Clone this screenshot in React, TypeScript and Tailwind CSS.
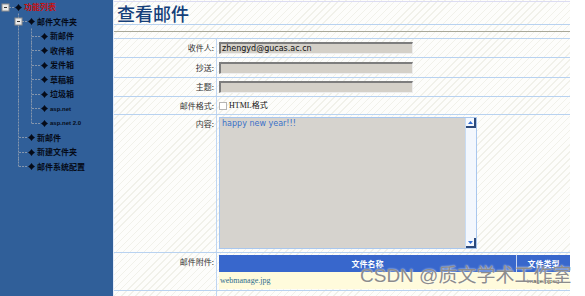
import React from 'react'

type Guide = 'blank' | 'I' | 'T' | 'L' | 'box' | 'boxT'

type TreeRow = {
  label: string
  guides: Guide[]
  root?: boolean
  latin?: boolean
}

const treeRows: TreeRow[] = [
  { label: '功能列表', guides: ['box'], root: true },
  { label: '邮件文件夹', guides: ['blank', 'boxT'] },
  { label: '新邮件', guides: ['blank', 'I', 'T'] },
  { label: '收件箱', guides: ['blank', 'I', 'T'] },
  { label: '发件箱', guides: ['blank', 'I', 'T'] },
  { label: '草稿箱', guides: ['blank', 'I', 'T'] },
  { label: '垃圾箱', guides: ['blank', 'I', 'T'] },
  { label: 'asp.net', guides: ['blank', 'I', 'T'], latin: true },
  { label: 'asp.net 2.0', guides: ['blank', 'I', 'L'], latin: true },
  { label: '新邮件', guides: ['blank', 'T'] },
  { label: '新建文件夹', guides: ['blank', 'T'] },
  { label: '邮件系统配置', guides: ['blank', 'L'] },
]

// one cell of the dotted tree guides
function GuideCell({ kind }: { kind: Guide }) {
  const stroke = '#8596ad'
  return (
    <svg width="13" height="15" viewBox="0 0 13 15" className="shrink-0 overflow-visible">
      {(kind === 'I' || kind === 'T' || kind === 'boxT') && (
        <line x1="5.5" y1="-0.5" x2="5.5" y2="15.5" stroke={stroke} strokeWidth="1" strokeDasharray="2 1" />
      )}
      {kind === 'L' && (
        <line x1="5.5" y1="-0.5" x2="5.5" y2="7.5" stroke={stroke} strokeWidth="1" strokeDasharray="2 1" />
      )}
      {kind !== 'blank' && kind !== 'I' && (
        <line x1="6" y1="7.5" x2="15" y2="7.5" stroke={stroke} strokeWidth="1" strokeDasharray="2 1" />
      )}
      {(kind === 'box' || kind === 'boxT') && (
        <g>
          <rect x="2" y="4" width="7" height="7" fill="#e9e9e9" stroke="#8d8d8d" strokeWidth="1" />
          <line x1="4" y1="7.5" x2="7" y2="7.5" stroke="#333333" strokeWidth="1" />
        </g>
      )}
    </svg>
  )
}

function Star() {
  return (
    <svg width="7" height="7" viewBox="0 0 7 7" className="shrink-0">
      <polygon points="3.5,0 5,2 7,3.5 5,5 3.5,7 2,5 0,3.5 2,2" fill="#050b18" />
    </svg>
  )
}

function Sidebar() {
  return (
    <div className="flex h-full w-[114px] shrink-0 flex-col border-r border-[#e4ecf8] bg-[#305f99] text-[#050b18]">
      {treeRows.map((row, i) => (
        <div key={i} className="flex h-[14.5px] items-center">
          {row.guides.map((g, j) => (
            <GuideCell key={j} kind={g} />
          ))}
          <span className="ml-[2px] flex">
            <Star />
          </span>
          {row.root ? (
            <span className="ml-[2px] text-[8px] font-bold leading-none text-[#c41010] font-['Noto_Sans_CJK_SC',sans-serif]">
              {row.label}
            </span>
          ) : row.latin ? (
            <span className="ml-[2px] text-[6px] font-bold leading-none text-[#050b18] font-['Liberation_Sans',sans-serif]">
              {row.label}
            </span>
          ) : (
            <span className="ml-[2px] text-[8px] font-bold leading-none text-[#050b18] font-['Noto_Sans_CJK_SC',sans-serif]">
              {row.label}
            </span>
          )}
        </div>
      ))}
    </div>
  )
}

function Input({ value }: { value?: string }) {
  return (
    <div className="flex h-[12px] w-[194px] items-center border-t-2 border-l-2 border-r border-b border-t-[#7d7d7d] border-l-[#7d7d7d] border-r-[#eeeeee] border-b-[#eeeeee] bg-[#d4d0c8] pl-[1px] text-[8px] leading-none text-[#111111] font-['DejaVu_Sans',sans-serif]">
      {value}
    </div>
  )
}

function FormRow({
  label,
  height,
  top,
  children,
}: {
  label: string
  height: string
  top?: boolean
  children?: React.ReactNode
}) {
  return (
    <div className={`flex border-b border-[#b8d2f0] ${height}`}>
      <div
        className={`flex w-[103px] shrink-0 justify-end border-r border-[#bfd6f2] pr-[2px] text-[8px] leading-none text-[#333333] font-['Noto_Sans_CJK_SC',sans-serif] ${
          top ? 'items-start pt-[5px]' : 'items-center'
        }`}
      >
        {label}:
      </div>
      <div className={`flex flex-1 pl-[2px] ${top ? 'items-start pt-[2px]' : 'items-center'}`}>
        {children}
      </div>
    </div>
  )
}

function ScrollButton({ up }: { up?: boolean }) {
  return (
    <div className="flex h-[10px] w-[10px] items-center justify-center border-r-2 border-b-2 border-[#2c4a7c] bg-[#f4f8fe]">
      <svg width="5" height="3" viewBox="0 0 5 3">
        <polygon points={up ? '2.5,0 5,3 0,3' : '0,0 5,0 2.5,3'} fill="#2f6ad0" />
      </svg>
    </div>
  )
}

export default function App() {
  return (
    <div className="relative flex h-[296px] w-[585px] overflow-hidden bg-white">
      <Sidebar />

      <div className="flex h-full w-[456px] shrink-0 flex-col bg-[repeating-linear-gradient(135deg,#fdfdfb_0px,#fdfdfb_4px,#f1f1ea_4px,#f1f1ea_5px)] pt-px">
        {/* title */}
        <div className="flex h-[24px] items-center border-t border-b border-t-[#dcdcf2] border-b-[#b8d2f0] pl-[3px]">
          <h1 className="text-[18px] font-medium leading-none text-[#15407a] font-['Noto_Sans_CJK_SC',sans-serif]">
            查看邮件
          </h1>
        </div>
        <div className="flex h-[14px] items-center border-b border-[#b8d2f0]">
          <div className="h-px w-full bg-[#a8a899]" />
        </div>

        <FormRow label="收件人" height="h-[19px]">
          <Input value="zhengyd@gucas.ac.cn" />
        </FormRow>
        <FormRow label="抄送" height="h-[20px]">
          <Input />
        </FormRow>
        <FormRow label="主题" height="h-[19px]">
          <Input />
        </FormRow>
        <FormRow label="邮件格式" height="h-[18px]">
          <span className="h-[8px] w-[8px] border border-[#b5b5b5] bg-white" />
          <span className="ml-[2px] text-[8px] leading-none text-[#111111] font-['Liberation_Serif','Noto_Sans_CJK_SC',serif]">
            HTML格式
          </span>
        </FormRow>
        <FormRow label="内容" height="h-[138px]" top>
          <div className="flex h-[132px] w-[258px] border border-[#a9c7ee]">
            <div className="flex-1 bg-[#d6d3ce] pl-[2px] pt-[1px] text-[8px] leading-tight text-[#3a70c8] font-['DejaVu_Sans',sans-serif]">
              happy new year!!!
            </div>
            <div className="flex w-[11px] flex-col justify-between border-l border-[#c8dcf4] bg-[#f3f7fd]">
              <ScrollButton up />
              <ScrollButton />
            </div>
          </div>
        </FormRow>
        <FormRow label="邮件附件" height="h-[38px]" top>
          <div className="flex w-full flex-col">
            <div className="flex h-[17px] bg-[#3867cc] text-[8px] font-bold leading-none text-white font-['Noto_Sans_CJK_SC',sans-serif]">
              <div className="flex flex-1 items-center justify-center">文件名称</div>
              <div className="flex w-[54px] items-center justify-center border-l border-[#c8d6f2]">文件类型</div>
            </div>
            <div className="flex h-[17px] bg-[#fffbdc] text-[8px] leading-none">
              <div className="flex flex-1 items-center pl-px text-[#2d6c8c] font-['Liberation_Serif',serif]">
                webmanage.jpg
              </div>
              <div className="flex w-[54px] items-center justify-center text-[6px] text-[#333333] font-['Liberation_Sans',sans-serif]">
                image/pjpeg
              </div>
            </div>
          </div>
        </FormRow>
        <div className="flex flex-1">
          <div className="w-[103px] border-r border-[#bfd6f2]" />
        </div>
      </div>

      {/* watermark */}
      <div className="pointer-events-none absolute left-[360px] top-[266px] text-[19px] leading-none text-[#8c8c8c] [text-shadow:0_0_2px_#ffffff] font-['Liberation_Sans','Noto_Sans_CJK_SC',sans-serif]">
        CSDN @质文学术工作室
      </div>
    </div>
  )
}
